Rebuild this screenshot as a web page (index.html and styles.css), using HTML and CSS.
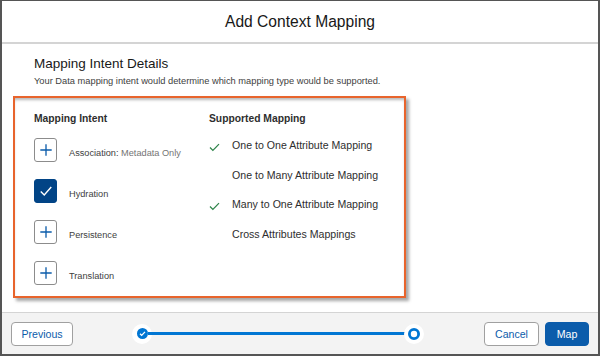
FILE: index.html
```html
<!DOCTYPE html>
<html>
<head>
<meta charset="utf-8">
<link rel="stylesheet" href="styles.css">
</head>
<body>
<div class="frame">
  <header class="header"><h1 class="title">Add Context Mapping</h1></header>
  <main class="content">
    <h2 class="section-title">Mapping Intent Details</h2>
    <p class="section-desc">Your Data mapping intent would determine which mapping type would be supported.</p>
    <div class="highlight">
      <div class="col col-intent">
        <div class="col-head">Mapping Intent</div>
        <div class="intent-list">
          <div class="intent">
            <span class="tile"><svg viewBox="0 0 16 16" width="14" height="14"><path d="M8 1.5v13M1.5 8h13" stroke="#0b5cab" stroke-width="1.5" fill="none"/></svg></span>
            <span class="intent-label">Association: <span class="muted">Metadata Only</span></span>
          </div>
          <div class="intent">
            <span class="tile tile-on"><svg viewBox="0 0 16 16" width="14" height="14"><path d="M2 8.5l4 4 8-9" stroke="#fff" stroke-width="1.6" fill="none"/></svg></span>
            <span class="intent-label">Hydration</span>
          </div>
          <div class="intent">
            <span class="tile"><svg viewBox="0 0 16 16" width="14" height="14"><path d="M8 1.5v13M1.5 8h13" stroke="#0b5cab" stroke-width="1.5" fill="none"/></svg></span>
            <span class="intent-label">Persistence</span>
          </div>
          <div class="intent">
            <span class="tile"><svg viewBox="0 0 16 16" width="14" height="14"><path d="M8 1.5v13M1.5 8h13" stroke="#0b5cab" stroke-width="1.5" fill="none"/></svg></span>
            <span class="intent-label">Translation</span>
          </div>
        </div>
      </div>
      <div class="col col-support">
        <div class="col-head">Supported Mapping</div>
        <div class="support-list">
          <div class="support"><span class="check"><svg viewBox="0 0 12 10" width="11" height="9"><path d="M1 5l3.2 3.2L11 1.2" stroke="#2e844a" stroke-width="1.4" fill="none"/></svg></span>One to One Attribute Mapping</div>
          <div class="support"><span class="check"></span>One to Many Attribute Mapping</div>
          <div class="support"><span class="check"><svg viewBox="0 0 12 10" width="11" height="9"><path d="M1 5l3.2 3.2L11 1.2" stroke="#2e844a" stroke-width="1.4" fill="none"/></svg></span>Many to One Attribute Mapping</div>
          <div class="support"><span class="check"></span>Cross Attributes Mappings</div>
        </div>
      </div>
    </div>
  </main>
  <footer class="footer">
    <button class="btn btn-neutral btn-prev">Previous</button>
    <div class="progress">
      <span class="step step-done"><svg viewBox="0 0 12 12" width="11" height="11"><circle cx="6" cy="6" r="6" fill="#0176d3"/><path d="M3.3 6.2l1.8 1.8 3.6-3.8" stroke="#fff" stroke-width="1.4" fill="none"/></svg></span>
      <span class="bar"></span>
      <span class="step step-current"><svg viewBox="0 0 12 12" width="12" height="12"><circle cx="6" cy="6" r="4.6" fill="#fff" stroke="#0176d3" stroke-width="2.8"/></svg></span>
    </div>
    <div class="actions">
      <button class="btn btn-neutral">Cancel</button>
      <button class="btn btn-brand">Map</button>
    </div>
  </footer>
</div>
</body>
</html>
```
FILE: styles.css
```css
* { box-sizing: border-box; }
html, body { margin: 0; padding: 0; }
body {
  font-family: "Liberation Sans", Arial, sans-serif;
  color: #181818;
  background: #fff;
}
.frame {
  width: 600px;
  height: 356px;
  border-top: 1px solid #555;
  border-left: 2px solid #555;
  border-right: 2px solid #555;
  border-bottom: 2px solid #555;
  display: flex;
  flex-direction: column;
  overflow: hidden;
}
.header {
  height: 43px;
  border-bottom: 2px solid #d4d4d4;
  display: flex;
  align-items: center;
  justify-content: center;
  flex: none;
}
.title {
  margin: 0;
  font-size: 15.6px;
  font-weight: normal;
  color: #181818;
  padding-top: 1px;
}
.content {
  flex: 1;
  padding: 11px 0 0 11px;
}
.section-title {
  margin: 0 0 0 21px;
  font-size: 13.5px;
  font-weight: normal;
  line-height: 18px;
  color: #181818;
}
.section-desc {
  margin: 1px 0 0 21px;
  font-size: 9.3px;
  line-height: 14px;
  color: #3e3e3e;
}
.highlight {
  margin-top: 8px;
  width: 393px;
  height: 202px;
  border: 2.5px solid #e8642c;
  box-shadow: 3px 3px 3px rgba(0,0,0,0.35), inset 0 3px 3px -1px rgba(0,0,0,0.28);
  display: flex;
  padding: 14px 0 0 19px;
}
.col-head {
  font-size: 10.3px;
  font-weight: bold;
  color: #2e2e2e;
  line-height: 13px;
}
.col-intent { width: 175px; }
.intent-list {
  margin-top: 13px;
  display: flex;
  flex-direction: column;
  gap: 17px;
}
.intent {
  display: flex;
  align-items: center;
  height: 24px;
}
.tile {
  width: 23px;
  height: 24px;
  border: 1px solid #8c8c8c;
  border-radius: 3px;
  display: flex;
  align-items: center;
  justify-content: center;
  background: #fff;
  flex: none;
}
.tile-on {
  background: #014486;
  border-color: #014486;
}
.intent-label {
  margin-left: 12px;
  margin-top: 5px;
  font-size: 9.2px;
  color: #3e3e3e;
}
.muted { color: #747474; }
.support-list {
  margin-top: 11px;
  display: flex;
  flex-direction: column;
  gap: 11.5px;
}
.support {
  display: flex;
  align-items: center;
  height: 18px;
  font-size: 10.6px;
  color: #2e2e2e;
}
.check {
  width: 23px;
  display: flex;
  align-items: center;
  padding-top: 4px;
  flex: none;
}
.footer {
  flex: none;
  height: 42px;
  background: #f3f3f3;
  border-top: 1px solid #d4d4d4;
  display: flex;
  align-items: center;
  padding: 0 9px 0 9px;
}
.btn {
  height: 24px;
  border-radius: 4px;
  font-family: "Liberation Sans", Arial, sans-serif;
  font-size: 10.6px;
  padding: 0;
  cursor: pointer;
}
.btn-neutral {
  background: #fff;
  border: 1px solid #a0a0a0;
  color: #0b5cab;
}
.btn-prev { width: 62px; }
.btn-brand {
  background: #0b5cab;
  border: 1px solid #0b5cab;
  color: #fff;
  width: 44px;
}
.actions {
  margin-left: auto;
  display: flex;
  gap: 6px;
}
.actions .btn-neutral { width: 55px; }
.progress {
  margin-left: 59px;
  display: flex;
  align-items: center;
  width: 292px;
}
.step {
  width: 20px;
  height: 20px;
  border-radius: 50%;
  background: #fff;
  display: flex;
  align-items: center;
  justify-content: center;
  flex: none;
}
.bar {
  flex: 1;
  height: 3px;
  background: #0176d3;
  margin: 0 -4px;
}
```
